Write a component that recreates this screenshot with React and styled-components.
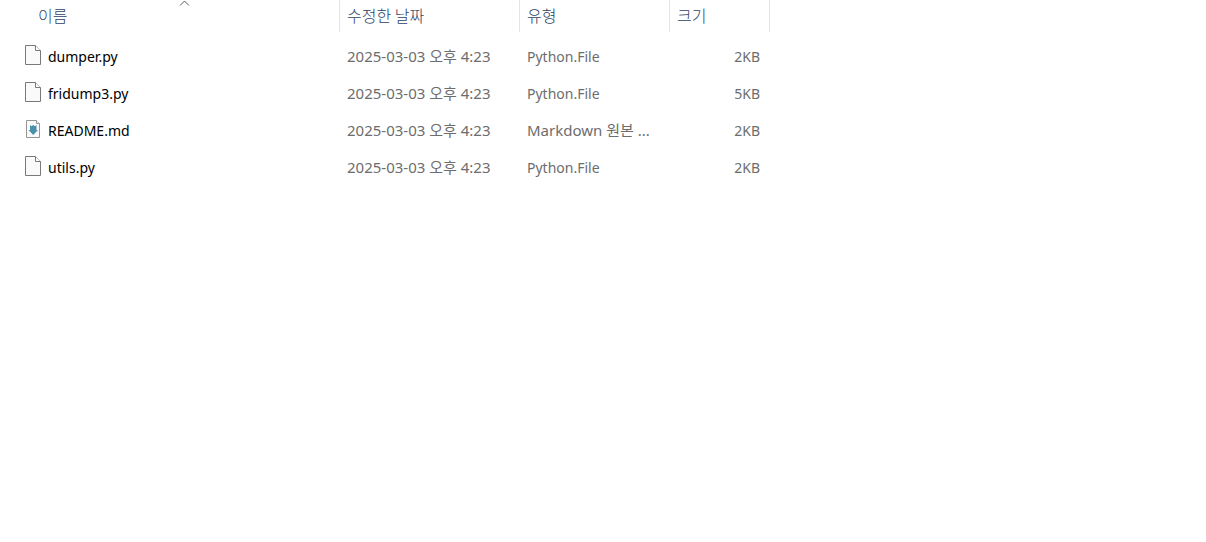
import React from 'react';
import { useState } from 'react';
import styled, { createGlobalStyle } from 'styled-components';

const GlobalStyle = createGlobalStyle`
  body {
    margin: 0;
    background-color: #ffffff;
    font-family: "Noto Sans", "Noto Sans CJK KR", sans-serif;
    font-size: 14px;
    line-height: 20px;
  }
`

const Container = styled.main`
  width: 100%;
  overflow-x: auto;
`

const Table = styled.table`
  table-layout: fixed;
  width: 0;
  border-collapse: collapse;
`

const Col = styled.col`
  width: ${props => props.$width};
`

const HeadCell = styled.th`
  position: relative;
  padding: 0 0 5px;
  font-weight: 400;
`

const HeadButton = styled.button`
  display: flex;
  align-items: center;
  width: 100%;
  height: 32px;
  padding: 0 8px 2px;
  padding-left: ${props => props.$first ? '38px' : '7px'};
  border: none;
  border-right: 1px solid #e5e5e5;
  background: none;
  color: #2c4263;
  font-family: "Noto Sans CJK KR", sans-serif;
  font-size: 16px;
  font-weight: 300;
  cursor: pointer;
`

const SortMark = styled.svg`
  position: absolute;
  top: 0;
  left: 30px;
  right: 2px;
  margin: 0 auto;
  pointer-events: none;
  transform: ${props => props.$down ? 'scaleY(-1)' : 'none'};
`

const Cell = styled.td`
  box-sizing: border-box;
  height: 37px;
  padding: ${props => props.$korean ? '0' : '2px'} 10px 0 7px;
  color: #6d6d6d;
  font-size: ${props => props.$korean ? '15px' : '14px'};
  text-align: ${props => props.$align || 'left'};
  white-space: nowrap;
  overflow: hidden;
  text-overflow: ellipsis;
`

const NameCell = styled(Cell)`
  padding-left: 24px;
  color: #000000;
`

const FileName = styled.div`
  display: flex;
  align-items: center;
  gap: 6px;
`

const Icon = styled.svg`
  flex: none;
  display: block;
`

const FileIcon = () => (
  <Icon width="18" height="24" viewBox="0 0 18 24" fill="none" aria-hidden="true">
    <path d="M1.5 0.5H11.5L16.5 5.5V19.5H1.5Z" fill="#fafafa" stroke="#7a7977" />
    <path d="M11.5 0.5V5.5H16.5" fill="#ffffff" stroke="#7a7977" />
  </Icon>
)

const MarkdownIcon = () => (
  <Icon width="18" height="24" viewBox="0 0 18 24" fill="none" aria-hidden="true">
    <path d="M2.5 1.5H12.5L15.5 4.5V18.5H2.5Z" fill="#fafafa" stroke="#959595" />
    <path d="M12.5 1.5V4.5H15.5" fill="#ffffff" stroke="#959595" />
    <path d="M6 6L7.5 7.2L9.2 6L11 7.2L12.5 6V11H14L9.2 16L4.5 11H6Z" fill="#4a8fab" />
  </Icon>
)

const columns = [
  { key: 'name', label: '이름', width: '340px' },
  { key: 'date', label: '수정한 날짜', width: '180px' },
  { key: 'type', label: '유형', width: '150px' },
  { key: 'size', label: '크기', width: '100px' },
]

const files = [
  { name: 'dumper.py', date: '2025-03-03 오후 4:23', type: 'Python.File', size: '2KB' },
  { name: 'fridump3.py', date: '2025-03-03 오후 4:23', type: 'Python.File', size: '5KB' },
  { name: 'README.md', date: '2025-03-03 오후 4:23', type: 'Markdown 원본 ...', size: '2KB' },
  { name: 'utils.py', date: '2025-03-03 오후 4:23', type: 'Python.File', size: '2KB' },
]

const hasKorean = (text) => /[가-힣]/.test(text);

const App = () => {
  const [sort, setSort] = useState({ key: 'name', down: false });

  const handleSort = (key) => {
    setSort({ key, down: sort.key === key && !sort.down });
  }

  const rows = [...files].sort((a, b) => {
    const order = a[sort.key].localeCompare(b[sort.key], 'en');
    return sort.down ? -order : order;
  });

  return (
    <Container>
      <GlobalStyle />
      <Table>
        <colgroup>
          {columns.map(col => <Col key={col.key} $width={col.width} />)}
        </colgroup>
        <thead>
          <tr>
            {columns.map((col, i) => (
              <HeadCell key={col.key} scope="col">
                <HeadButton type="button" $first={i === 0} onClick={() => handleSort(col.key)}>
                  {col.label}
                </HeadButton>
                {sort.key === col.key && (
                  <SortMark $down={sort.down} width="11" height="7" viewBox="0 0 11 7" fill="none" aria-hidden="true">
                    <path d="M1 5.5L5.5 1L10 5.5" stroke="#5c5c5c" />
                  </SortMark>
                )}
              </HeadCell>
            ))}
          </tr>
        </thead>
        <tbody>
          {rows.map(file => (
            <tr key={file.name}>
              <NameCell>
                <FileName>
                  {file.name.endsWith('.md') ? <MarkdownIcon /> : <FileIcon />}
                  {file.name}
                </FileName>
              </NameCell>
              <Cell $korean={hasKorean(file.date)}>{file.date}</Cell>
              <Cell $korean={hasKorean(file.type)}>{file.type}</Cell>
              <Cell $align="right">{file.size}</Cell>
            </tr>
          ))}
        </tbody>
      </Table>
    </Container>
  )
}

export default App;
